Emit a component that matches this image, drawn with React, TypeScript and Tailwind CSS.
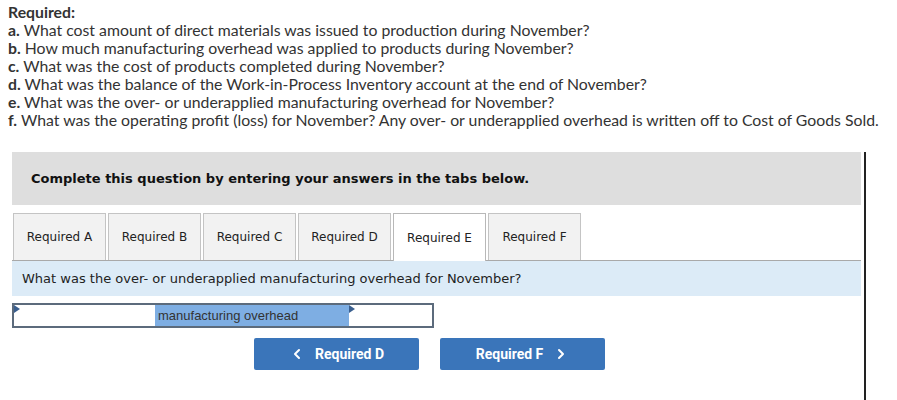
import { ChevronLeft, ChevronRight } from "lucide-react";

const questions = [
  ["a.", "What cost amount of direct materials was issued to production during November?"],
  ["b.", "How much manufacturing overhead was applied to products during November?"],
  ["c.", "What was the cost of products completed during November?"],
  ["d.", "What was the balance of the Work-in-Process Inventory account at the end of November?"],
  ["e.", "What was the over- or underapplied manufacturing overhead for November?"],
  ["f.", "What was the operating profit (loss) for November? Any over- or underapplied overhead is written off to Cost of Goods Sold."],
];

const tabs = ["Required A", "Required B", "Required C", "Required D", "Required E", "Required F"];

function Marker() {
  return (
    <span className="absolute left-0 top-0 h-0 w-0 border-y-[4px] border-l-[6px] border-y-transparent border-l-[#3a5f8f]" />
  );
}

export default function App() {
  return (
    <div className="h-[400px] w-[897px] overflow-hidden bg-white">
      <div className="whitespace-nowrap pl-2 pt-[3px] font-['Lato','Open_Sans',sans-serif] text-[15.8px] leading-[18px] text-[#333]">
        <p className="font-bold">Required:</p>
        {questions.map(([k, q]) => (
          <p key={k}>
            <span className="font-bold">{k}</span> {q}
          </p>
        ))}
      </div>

      <div className="ml-3 mt-[23px] w-[854px] border-r-2 border-[#222] pr-[3px] pb-10 font-['DejaVu_Sans','Verdana',sans-serif]">
        <div className="flex h-[53px] items-center bg-[#dedede] px-[19px] text-[13px] font-bold text-[#111]">
          Complete this question by entering your answers in the tabs below.
        </div>

        <div className="mt-[8px] flex gap-[2px] border-b border-[#a9a9a9] pl-[1px]">
          {tabs.map((t) => (
            <div
              key={t}
              className={
                t === "Required E"
                  ? "-mb-px flex h-[48px] w-[93px] items-center justify-center border border-b-0 border-[#b8b8b8] bg-white text-[12px] text-[#222]"
                  : "flex h-[47px] w-[93px] items-center justify-center border border-b-0 border-[#c4c4c4] bg-[#f2f2f2] text-[12px] text-[#222]"
              }
            >
              {t}
            </div>
          ))}
        </div>

        <div className="flex h-[35px] items-center bg-[#dcebf7] px-[10px] text-[13px] text-[#222]">
          What was the over- or underapplied manufacturing overhead for November?
        </div>

        <div className="mt-[7px] flex h-[25px] font-['Liberation_Sans',Arial,sans-serif] text-[13px] text-[#333]">
          <div className="relative h-full w-[143px] border-2 border-r-0 border-[#5c6b7c] bg-white">
            <Marker />
          </div>
          <div className="flex h-full w-[194px] items-center border-y-2 border-[#5c6b7c] bg-[#7eaee3] pl-[3px]">
            manufacturing overhead
          </div>
          <div className="relative h-full w-[85px] border-2 border-l-0 border-[#5c6b7c] bg-white">
            <Marker />
          </div>
        </div>

        <div className="mt-[10px] flex gap-[21px] pl-[242px] font-['Roboto',sans-serif] text-[14px] font-bold text-white">
          <div className="flex h-[32px] w-[165px] items-center justify-center gap-[10px] rounded-[2px] bg-[#3a75ba]">
            <ChevronLeft size={16} strokeWidth={3} />
            Required D
          </div>
          <div className="flex h-[32px] w-[165px] items-center justify-center gap-[10px] rounded-[2px] bg-[#3a75ba]">
            Required F
            <ChevronRight size={16} strokeWidth={3} />
          </div>
        </div>
      </div>
    </div>
  );
}
